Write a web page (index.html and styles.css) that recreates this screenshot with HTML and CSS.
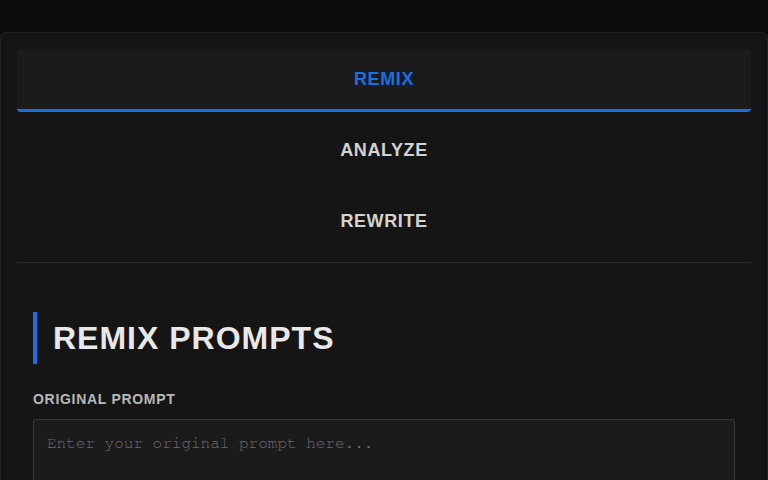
FILE: index.html
```html
<!DOCTYPE html>
<html>
  <head>
    <title>Prompt Tools</title>
    <meta charset="UTF-8" />
    <link rel="stylesheet" href="styles.css">
  </head>
  <body>
    <div class="topbar"></div>
    <div class="card">
      <nav class="tabs">
        <button class="tab active">REMIX</button>
        <button class="tab">ANALYZE</button>
        <button class="tab">REWRITE</button>
      </nav>
      <section class="panel">
        <h2>REMIX PROMPTS</h2>
        <label class="field">
          <span class="label">ORIGINAL PROMPT</span>
          <textarea placeholder="Enter your original prompt here..."></textarea>
        </label>
      </section>
    </div>
  </body>
</html>
```

FILE: styles.css
```css
body {
  margin: 0;
  background: #0b0b0b;
  font-family: "Liberation Sans", Arial, sans-serif;
  color: #e8e8e8;
  overflow: hidden;
}
.topbar {
  height: 32px;
  background: #0b0b0b;
}
.card {
  background: #151515;
  border: 1px solid #222;
  border-radius: 6px;
  padding: 16px;
  width: 768px;
  box-sizing: border-box;
  min-height: 460px;
}
.tabs {
  display: flex;
  flex-direction: column;
  gap: 8px;
  padding-bottom: 8px;
  border-bottom: 1px solid #2a2a2a;
}
.tab {
  height: 63px;
  background: transparent;
  border: 0;
  border-bottom: 3px solid transparent;
  border-radius: 4px;
  color: #d2d2d2;
  font-family: "Liberation Sans", Arial, sans-serif;
  font-size: 18px;
  font-weight: bold;
  letter-spacing: 0.6px;
  padding: 0;
}
.tab.active {
  background: #1b1b1b;
  border-bottom-color: #1a6fe4;
  color: #1a6fe4;
}
.panel {
  padding: 49px 16px 0;
}
h2 {
  margin: 0;
  border-left: 4px solid #1a6fe4;
  padding: 7px 0 7px 16px;
  font-size: 32px;
  line-height: 38px;
  letter-spacing: 1px;
  color: #e8e8e8;
}
.field {
  display: block;
  margin-top: 26px;
}
.label {
  display: block;
  font-size: 14px;
  font-weight: bold;
  letter-spacing: 0.7px;
  color: #b8b8b8;
  line-height: 18px;
  margin-bottom: 11px;
}
textarea {
  display: block;
  width: 100%;
  box-sizing: border-box;
  height: 120px;
  background: #1b1b1b;
  border: 1px solid #383838;
  border-radius: 2px;
  padding: 14px 13px;
  font-family: "Nimbus Mono PS", FreeMono, Courier, monospace;
  font-size: 16px;
  line-height: 18px;
  color: #ddd;
  resize: none;
}
textarea::placeholder {
  color: #6c6c6c;
}
```
